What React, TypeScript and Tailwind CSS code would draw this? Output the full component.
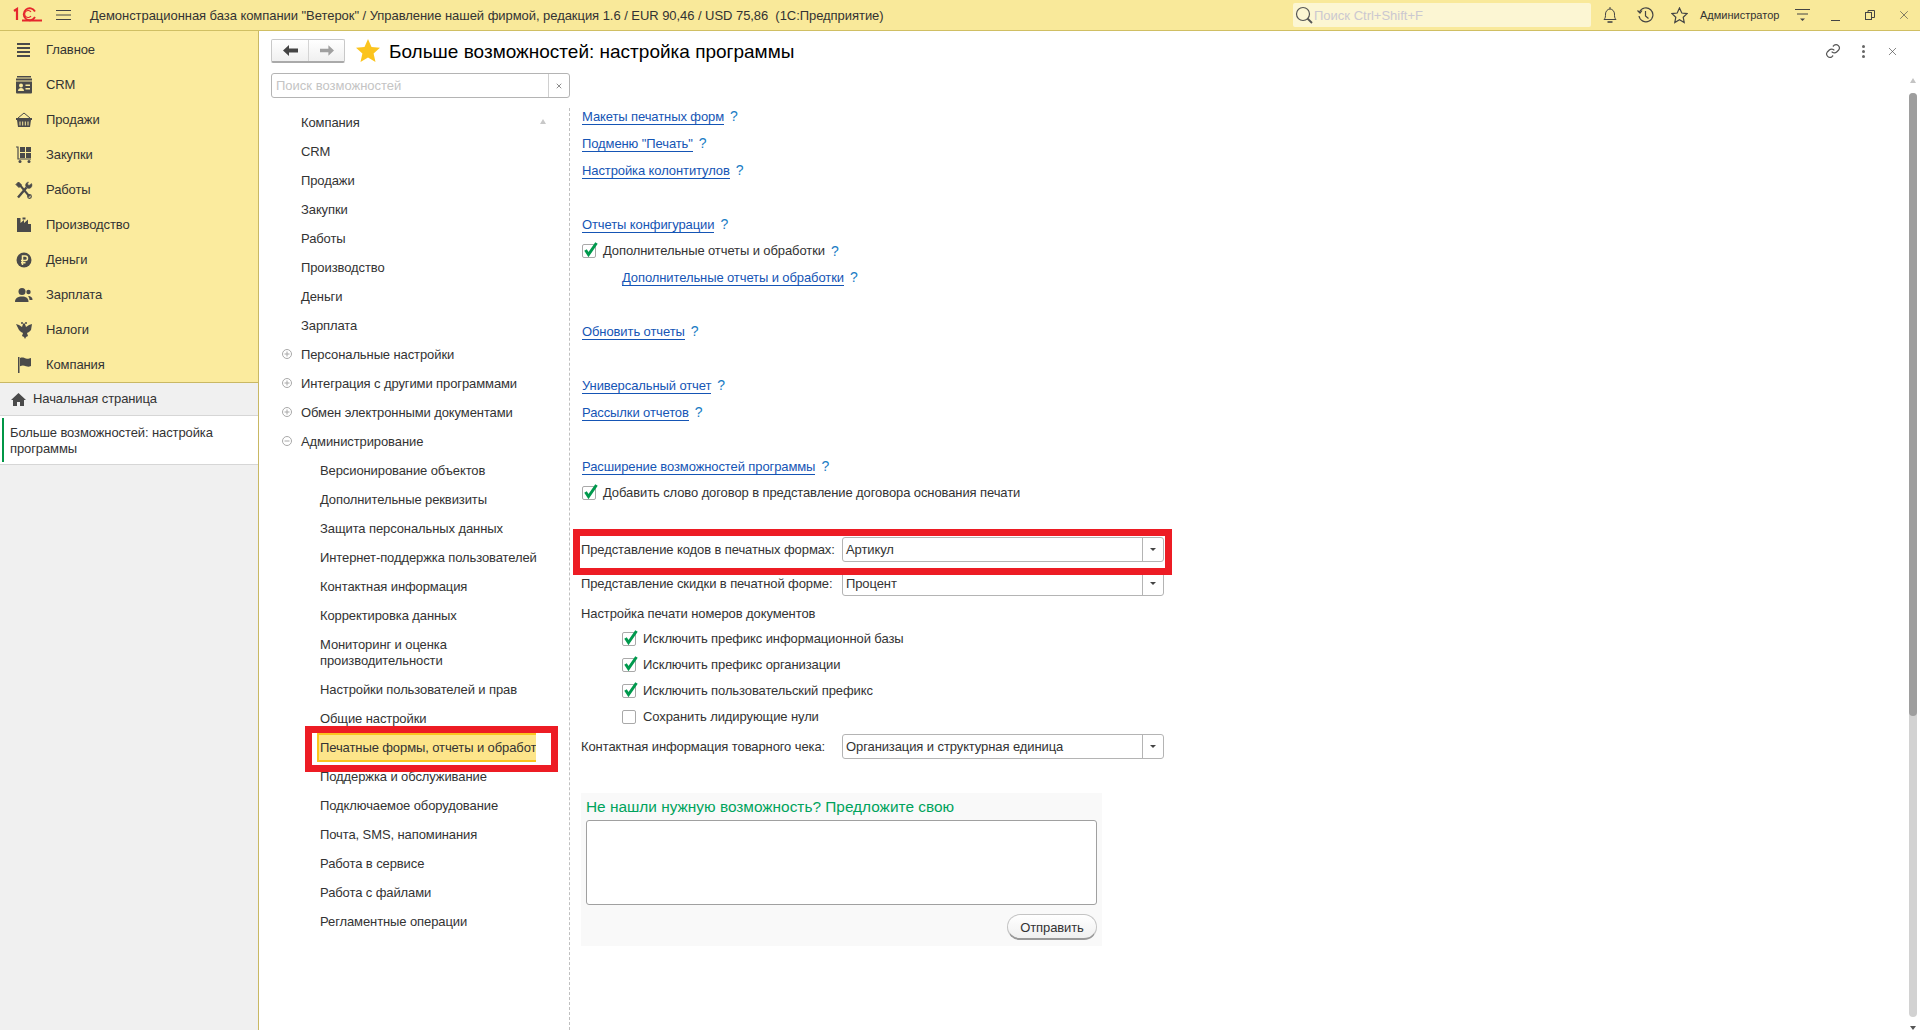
import React from 'react';
import { X } from 'lucide-react';

const IconMenu = () => (
  <svg width="18" height="16" viewBox="0 0 18 16" fill="#4a4a4a">
    <rect x="2" y="1" width="13" height="2" /><rect x="2" y="5" width="13" height="2" /><rect x="2" y="9" width="13" height="2" /><rect x="2" y="13" width="13" height="2" />
  </svg>
);
const IconCrm = () => (
  <svg width="18" height="18" viewBox="0 0 18 18" fill="#4a4a4a">
    <rect x="2" y="0" width="14" height="1.5" /><rect x="1" y="2.500" width="16" height="2" />
    <path d="M1 5.500h16v11a1 1 0 0 1-1 1H2a1 1 0 0 1-1-1z" />
    <circle cx="6" cy="9.500" r="2" fill="#fbeb9e" /><path d="M3 15c0-2 1.400-3 3-3s3 1 3 3z" fill="#fbeb9e" />
    <rect x="10.500" y="8.500" width="4.500" height="1.500" fill="#fbeb9e" /><rect x="10.500" y="12" width="4.500" height="1.500" fill="#fbeb9e" />
  </svg>
);
const IconBasket = () => (
  <svg width="18" height="16" viewBox="0 0 18 16" fill="#4a4a4a">
    <path d="M3 6l6-5 6 5" fill="none" stroke="#4a4a4a" strokeWidth="1" />
    <rect x="1" y="6" width="16" height="2" />
    <path d="M2 8h14l-1 7H3z" />
    <path d="M5 9.500v4M7.700 9.500v4M10.300 9.500v4M13 9.500v4" stroke="#fbeb9e" strokeWidth="1" />
  </svg>
);
const IconCart = () => (
  <svg width="18" height="18" viewBox="0 0 18 18" fill="#4a4a4a">
    <path d="M1 1h2v12h13" fill="none" stroke="#4a4a4a" strokeWidth="1.200" />
    <rect x="5" y="1" width="5" height="5" /><rect x="11" y="1" width="5" height="5" /><rect x="5" y="7" width="5" height="5" /><rect x="11" y="7" width="5" height="5" />
    <circle cx="5" cy="15.500" r="1.500" /><circle cx="14" cy="15.500" r="1.500" />
  </svg>
);
const IconTools = () => (
  <svg width="18" height="18" viewBox="0 0 18 18" fill="none" stroke="#4a4a4a">
    <path d="M3 16.500L11.500 6.500" strokeWidth="2.400" />
    <path d="M4 3l10.500 12.500" strokeWidth="2" />
    <path d="M1 3.500L3.500 1 6.500 4 4 6.500z" fill="#4a4a4a" strokeWidth="1" />
    <path d="M16.500 2.500a3.200 3.200 0 1 1-3-1.500l-1 2 1.500 1.500z" fill="#4a4a4a" strokeWidth="0.500" />
    <circle cx="14.500" cy="15.500" r="1.800" strokeWidth="1.200" />
  </svg>
);
const IconFactory = () => (
  <svg width="18" height="16" viewBox="0 0 18 16" fill="#4a4a4a">
    <path d="M2 15V1h3.500v5l3.500-3v3l4-3.500V7h3v8z" />
    <path d="M7.500 0.500h3V2.500h-3z" />
  </svg>
);
const IconRuble = () => (
  <svg width="18" height="18" viewBox="0 0 18 18">
    <circle cx="9" cy="9" r="7.500" fill="#4a4a4a" />
    <path d="M7.500 14V5h2.700a2.200 2.200 0 0 1 0 4.600H6M6 11.800h4.500" fill="none" stroke="#fbeb9e" strokeWidth="1.500" />
  </svg>
);
const IconUsers = () => (
  <svg width="18" height="16" viewBox="0 0 18 16" fill="#4a4a4a">
    <circle cx="7" cy="4.500" r="3.500" /><path d="M0 15c0-4 3-5.500 7-5.500s6.500 1.500 6.500 5.500z" />
    <circle cx="13.500" cy="5" r="2.200" /><path d="M14 9c2 .3 3.500 1.400 3.500 4h-3c0-1.500-.5-3-1.500-3.500z" />
  </svg>
);
const IconEagle = () => (
  <svg width="18" height="18" viewBox="0 0 18 18" fill="#4a4a4a">
    <path d="M1 3l3 1 3 2 1-3 1-1 1 1 1 3 3-2 3-1-1 6-2 2-2 1 1 3-2 1-1 2-1-2-2-1 1-3-2-1-2-2z" />
    <circle cx="7" cy="2" r="1" /><circle cx="11" cy="2" r="1" />
  </svg>
);
const IconFlag = () => (
  <svg width="18" height="18" viewBox="0 0 18 18" fill="#4a4a4a">
    <rect x="3" y="1" width="1.500" height="16" />
    <path d="M5 2c2.500-1 4 0 6 .5s3 0 5-.5v8c-2 .8-3 .8-5 .2s-3.500-1-6 0z" />
  </svg>
);
const IconHome = () => (
  <svg width="15" height="13" viewBox="0 0 15 13" fill="#4a4a4a">
    <path d="M7.500 0L15 7h-2v6H9V9H6v4H2V7H0z" />
  </svg>
);

const Logo = () => (
  <svg width="30" height="16" viewBox="0 0 30 16" fill="none" stroke="#e5262d">
    <path d="M1 4l3-2v11" strokeWidth="2.200" />
    <path d="M24 4.500a6 6 0 1 0 0 5.500" strokeWidth="1.800" transform="translate(-2 0)" />
    <path d="M22 4.500a3.500 3.500 0 1 0 0 4" strokeWidth="1.200" transform="translate(-4 .5)" />
    <path d="M9 13.500h20" strokeWidth="2" />
  </svg>
);

const sideItems: [React.ReactNode, string][] = [
  [<IconMenu />, 'Главное'],
  [<IconCrm />, 'CRM'],
  [<IconBasket />, 'Продажи'],
  [<IconCart />, 'Закупки'],
  [<IconTools />, 'Работы'],
  [<IconFactory />, 'Производство'],
  [<IconRuble />, 'Деньги'],
  [<IconUsers />, 'Зарплата'],
  [<IconEagle />, 'Налоги'],
  [<IconFlag />, 'Компания'],
];

const Sidebar = () => (
  <aside className="w-[259px] shrink-0 flex flex-col bg-[#f0f0f0] border-r border-[#c9b864]">
    <div className="bg-[#fbeb9e] pt-px border-b border-[#c9b864]">
      {sideItems.map(([icon, label]) => (
        <div key={label} className="h-[35px] flex items-center pl-[15px] gap-[13px] text-[#333]">
          <span className="w-[18px] flex justify-center">{icon}</span>
          <span>{label}</span>
        </div>
      ))}
    </div>
    <div className="h-[33px] flex items-center pl-[11px] gap-[7px] border-b border-[#d6d6d6] text-[#333]">
      <IconHome />
      <span>Начальная страница</span>
    </div>
    <div className="h-[49px] bg-white border-b border-[#d6d6d6] py-[2px] pl-[2px]">
      <div className="h-full border-l-2 border-[#009646] pl-[6px] pt-[7px] leading-[16px] text-[#333]">
        Больше возможностей: настройка программы
      </div>
    </div>
  </aside>
);

const Expander = ({ open }: { open?: boolean }) => (
  <svg width="10" height="10" viewBox="0 0 10 10" fill="none" stroke="#a8a8a8" className="absolute left-[11px] top-[9px]">
    <circle cx="5" cy="5" r="4.500" />
    <path d="M2.500 5h5" />
    {!open && <path d="M5 2.500v5" />}
  </svg>
);

const topTree = ['CRM', 'Продажи', 'Закупки', 'Работы', 'Производство', 'Деньги', 'Зарплата'];
const subTreeTop = ['Версионирование объектов', 'Дополнительные реквизиты', 'Защита персональных данных', 'Интернет-поддержка пользователей', 'Контактная информация', 'Корректировка данных'];
const subTreeBottom = ['Поддержка и обслуживание', 'Подключаемое оборудование', 'Почта, SMS, напоминания', 'Работа в сервисе', 'Работа с файлами', 'Регламентные операции'];

const TreeRow = ({ label, sub, children }: { label: string; sub?: boolean; children?: React.ReactNode }) => (
  <div className={sub ? 'h-[29px] flex items-center pl-[49px] relative' : 'h-[29px] flex items-center pl-[30px] relative'}>
    {children}
    <span>{label}</span>
  </div>
);

const Tree = () => (
  <div className="w-[299px] shrink-0 border-r border-dashed border-[#c0c0c0] text-[#333]">
    <div className="h-[29px] flex items-center pl-[30px] pr-[23px] justify-between">
      <span>Компания</span>
      <span className="w-0 h-0 border-x-[3px] border-x-transparent border-b-[5px] border-b-[#c8c8c8] mb-[2px]" />
    </div>
    {topTree.map((t) => <TreeRow key={t} label={t} />)}
    <TreeRow label="Персональные настройки"><Expander /></TreeRow>
    <TreeRow label="Интеграция с другими программами"><Expander /></TreeRow>
    <TreeRow label="Обмен электронными документами"><Expander /></TreeRow>
    <TreeRow label="Администрирование"><Expander open /></TreeRow>
    {subTreeTop.map((t) => <TreeRow key={t} label={t} sub />)}
    <div className="h-[45px] flex items-center pl-[49px] leading-[16px]">
      <span>Мониторинг и оценка<br />производительности</span>
    </div>
    <TreeRow label="Настройки пользователей и прав" sub />
    <TreeRow label="Общие настройки" sub />
    <div className="h-[29px] ml-[46px] w-[219px] flex items-center pl-px bg-[#fde58a] border-y-2 border-l-2 border-[#fbc41e] overflow-hidden whitespace-nowrap">
      Печатные формы, отчеты и обработки
    </div>
    {subTreeBottom.map((t) => <TreeRow key={t} label={t} sub />)}
  </div>
);

const Help = () => <span className="ml-[6px] text-[#1a7cc4] text-[14px]">?</span>;

const LinkRow = ({ text, className }: { text: string; className?: string }) => (
  <div className={'h-[27px] flex items-center ' + (className || '')}>
    <a className="text-[#1555b5] border-b border-[#1555b5] leading-[15px]">{text}</a>
    <Help />
  </div>
);

const Check = ({ checked }: { checked?: boolean }) => (
  <span className="relative w-[14px] h-[14px] shrink-0 bg-white border border-[#a9a9a9] rounded-[2px]">
    {checked && (
      <svg width="16" height="16" viewBox="0 0 16 16" fill="none" stroke="#00994d" strokeWidth="3" className="absolute left-0 -top-[4px]">
        <path d="M2.500 9l3 4.500L13.500 2" />
      </svg>
    )}
  </span>
);

const CheckRow = ({ text, checked, help, className }: { text: string; checked?: boolean; help?: boolean; className?: string }) => (
  <div className={'h-[26px] flex items-center gap-[7px] text-[#333] ' + (className || '')}>
    <Check checked={checked} />
    <span className="flex items-center">
      {text}
      {help && <Help />}
    </span>
  </div>
);

const Combo = ({ label, value, className }: { label: string; value: string; className?: string }) => (
  <div className={'flex items-center text-[#333] ' + (className || '')}>
    <span className="w-[261px] whitespace-nowrap">{label}</span>
    <div className="w-[322px] h-[25px] flex border border-[#b4b4b4] rounded-[3px] bg-white">
      <span className="flex-1 pl-[3px] leading-[23px]">{value}</span>
      <span className="w-[21px] border-l border-[#b4b4b4] flex items-center justify-center">
        <span className="w-0 h-0 border-x-[3px] border-x-transparent border-t-[3px] border-t-[#444]" />
      </span>
    </div>
  </div>
);

const Settings = () => (
  <div className="flex-1 pl-[11px] min-w-0">
    <div className="ml-px">
      <LinkRow text="Макеты печатных форм" className="mt-[-5px]" />
      <LinkRow text={'Подменю "Печать"'} />
      <LinkRow text="Настройка колонтитулов" />
      <LinkRow text="Отчеты конфигурации" className="mt-[27px]" />
      <CheckRow text="Дополнительные отчеты и обработки" checked help />
      <LinkRow text="Дополнительные отчеты и обработки" className="ml-[40px]" />
      <LinkRow text="Обновить отчеты" className="mt-[27px]" />
      <LinkRow text="Универсальный отчет" className="mt-[27px]" />
      <LinkRow text="Рассылки отчетов" />
      <LinkRow text="Расширение возможностей программы" className="mt-[27px]" />
      <CheckRow text="Добавить слово договор в представление договора основания печати" checked />
    </div>
    <Combo label="Представление кодов в печатных формах:" value="Артикул" className="mt-[31px]" />
    <Combo label="Представление скидки в печатной форме:" value="Процент" className="mt-[9px]" />
    <div className="h-[25px] mt-[5px] flex items-center text-[#333]">Настройка печати номеров документов</div>
    <div className="ml-[41px]">
      <CheckRow text="Исключить префикс информационной базы" checked />
      <CheckRow text="Исключить префикс организации" checked />
      <CheckRow text="Исключить пользовательский префикс" checked />
      <CheckRow text="Сохранить лидирующие нули" />
    </div>
    <Combo label="Контактная информация товарного чека:" value="Организация и структурная единица" className="mt-[4px]" />
    <div className="mt-[34px] w-[521px] h-[153px] bg-[#f9f9f9] px-[5px]">
      <div className="h-[27px] pt-px flex items-center text-[15.4px] tracking-normal text-[#00a35c]">Не нашли нужную возможность? Предложите свою</div>
      <div className="h-[85px] bg-white border border-[#a0a0a0] rounded-[3px]" />
      <div className="flex justify-end mt-[9px]">
        <button className="w-[90px] h-[26px] pt-[2px] rounded-full border border-[#c4c4c4] border-b-2 border-b-[#999] bg-gradient-to-b from-white to-[#f0f0f0] text-[#333]">Отправить</button>
      </div>
    </div>
  </div>
);

const Scrollbar = () => (
  <div className="w-[8px] mr-[3px] ml-[3px] shrink-0 flex flex-col items-center pt-[8px]">
    <span className="w-0 h-0 border-x-[3px] border-x-transparent border-b-[5px] border-b-[#c4c4c4]" />
    <div className="mt-[10px] w-[8px] h-[924px] rounded-full bg-[#d2d2d2]">
      <div className="h-[623px] rounded-full bg-[#9e9e9e]" />
    </div>
    <span className="mt-[9px] w-0 h-0 border-x-[3px] border-x-transparent border-t-[4px] border-t-[#555]" />
  </div>
);

export default function App() {
  return (
    <div className="relative w-[1920px] h-[1030px] overflow-hidden flex flex-col bg-white text-[13px] tracking-[-0.1px] [font-family:'Liberation_Sans',Arial,sans-serif]">
      {/* Top bar */}
      <header className="h-[31px] shrink-0 flex items-center bg-[#f9e99a] border-b border-[#d0bf63] text-[#333]">
        <div className="w-[56px] pl-[13px]"><Logo /></div>
        <svg width="15" height="14" viewBox="0 0 15 14" stroke="#444" className="mr-[19px]">
          <path d="M0 2.500h15M0 7h15M0 11.500h15" />
        </svg>
        <span className="pt-px tracking-[-0.05px] whitespace-nowrap">Демонстрационная база компании "Ветерок" / Управление нашей фирмой, редакция 1.6 / EUR 90,46 / USD 75,86&nbsp;&nbsp;(1С:Предприятие)</span>
        <div className="ml-auto w-[298px] h-[24px] flex items-center rounded-[2px] bg-[#fcf6d3] pl-[2px]">
          <svg width="18" height="18" viewBox="0 0 18 18" fill="none" stroke="#555" strokeWidth="1.200">
            <circle cx="8" cy="8" r="6.500" /><path d="M12.500 12.500L17 17" strokeWidth="1.800" />
          </svg>
          <span className="ml-[1px] pt-px text-[#cbc8d0] tracking-normal">Поиск Ctrl+Shift+F</span>
        </div>
        <div className="w-[36px] ml-[1px] flex justify-center">
          <svg width="16" height="18" viewBox="0 0 16 18" fill="none" stroke="#444">
            <path d="M2 13.500c1.500-1.500 1.500-3 1.500-5.500S5.500 3 8 3s4.500 2.500 4.500 5 0 4 1.500 5.500z" /><path d="M8 1v2" /><path d="M5.500 16h5" strokeWidth="1.600" />
          </svg>
        </div>
        <div className="w-[34px] flex justify-center">
          <svg width="17" height="17" viewBox="0 0 17 17" fill="none" stroke="#444" strokeWidth="1.200">
            <path d="M2.500 5A7 7 0 1 1 2 9" /><path d="M0.500 3.500L3 6l2-2.500" /><path d="M8.500 4v5l3 2.500" />
          </svg>
        </div>
        <div className="w-[34px] flex justify-center">
          <svg width="17" height="17" viewBox="0 0 17 17" fill="none" stroke="#444" strokeWidth="1.200">
            <path d="M8.500 1l2.300 5 5.200.6-3.800 3.600 1 5.300-4.700-2.700-4.700 2.700 1-5.300L1 6.600 6.200 6z" />
          </svg>
        </div>
        <span className="w-[91px] pl-[4px] text-[11px] tracking-normal whitespace-nowrap">Администратор</span>
        <div className="w-[30px] flex justify-center">
          <svg width="15" height="14" viewBox="0 0 15 14" stroke="#444" fill="#444">
            <path d="M0 1.500h15M2 6h11" fill="none" /><path d="M5 10.500h5L7.500 13z" stroke="none" />
          </svg>
        </div>
        <div className="w-[36px] pl-[2px] flex justify-center">
          <svg width="10" height="12" viewBox="0 0 10 12" stroke="#444"><path d="M0 11.500h9" /></svg>
        </div>
        <div className="w-[34px] flex justify-center">
          <svg width="10" height="10" viewBox="0 0 10 10" fill="none" stroke="#444"><rect x="0.500" y="2.500" width="6" height="7" /><path d="M3 2.500V.5h6.500v7h-3" /></svg>
        </div>
        <div className="w-[33px] flex justify-center"><X size={14} strokeWidth={1.100} color="#444" /></div>
      </header>

      <div className="flex-1 flex min-h-0">
        <Sidebar />
        <main className="flex-1 flex flex-col min-w-0 pl-[12px]">
          {/* Title row */}
          <div className="h-[39px] shrink-0 flex items-start pt-[8px]">
            <div className="w-[74px] h-[24px] flex rounded-[2px] border border-[#c8c8c8] border-b-2 border-b-[#aaa] bg-gradient-to-b from-white to-[#f0f0f0]">
              <span className="w-[37px] border-r border-[#d4d4d4] flex items-center justify-center">
                <svg width="15" height="11" viewBox="0 0 15 11" fill="#444"><path d="M6 0v3.500h9v4H6V11L0 5.500z" /></svg>
              </span>
              <span className="flex-1 flex items-center justify-center">
                <svg width="14" height="11" viewBox="0 0 15 11" fill="#a0a0a0"><path d="M9 0v3.500H0v4h9V11l6-5.500z" /></svg>
              </span>
            </div>
            <svg width="24" height="23" viewBox="0 0 24 23" fill="#fbc41e" className="ml-[11px]">
              <path d="M12 0l3.500 8 8.500.8-6.400 5.700L19.500 23 12 18.500 4.500 23l1.900-8.500L0 8.800 8.500 8z" />
            </svg>
            <span className="ml-[9px] text-[19px] tracking-normal leading-[25px] text-black">Больше возможностей: настройка программы</span>
            <div className="ml-auto flex items-center h-[20px] mt-[2px] pr-[21px]">
              <svg width="16" height="16" viewBox="0 0 24 24" fill="none" stroke="#555" strokeWidth="1.800">
                <path d="M10 13a5 5 0 0 0 7.500.5l3-3a5 5 0 0 0-7-7l-1.700 1.700" /><path d="M14 11a5 5 0 0 0-7.500-.5l-3 3a5 5 0 0 0 7 7l1.700-1.700" />
              </svg>
              <span className="ml-[21px] flex flex-col gap-[2px]">
                <span className="w-[3px] h-[3px] rounded-full bg-[#666]" /><span className="w-[3px] h-[3px] rounded-full bg-[#666]" /><span className="w-[3px] h-[3px] rounded-full bg-[#666]" />
              </span>
              <span className="ml-[21px]"><X size={13} strokeWidth={1.200} color="#444" /></span>
            </div>
          </div>

          <div className="flex-1 flex min-h-0">
            <div className="flex-1 flex flex-col min-w-0">
              {/* Search */}
              <div className="mt-[3px] w-[299px] h-[25px] shrink-0 flex border border-[#b4b4b4] rounded-[3px]">
                <span className="flex-1 pl-[4px] leading-[23px] tracking-normal text-[#c4c4c4]">Поиск возможностей</span>
                <span className="w-[21px] border-l border-[#d0d0d0] flex items-center justify-center"><X size={8} strokeWidth={2} color="#555" /></span>
              </div>
              <div className="mt-[10px] flex-1 flex min-h-0">
                <Tree />
                <Settings />
              </div>
            </div>
            <Scrollbar />
          </div>
        </main>
      </div>

      {/* Red marks over the screenshot */}
      <div className="absolute left-[573px] top-[529px] w-[599px] h-[46px] border-[7px] border-[#ed1c24] pointer-events-none" />
      <div className="absolute left-[305px] top-[726px] w-[253px] h-[46px] border-[7px] border-[#ed1c24] pointer-events-none" />
    </div>
  );
}
